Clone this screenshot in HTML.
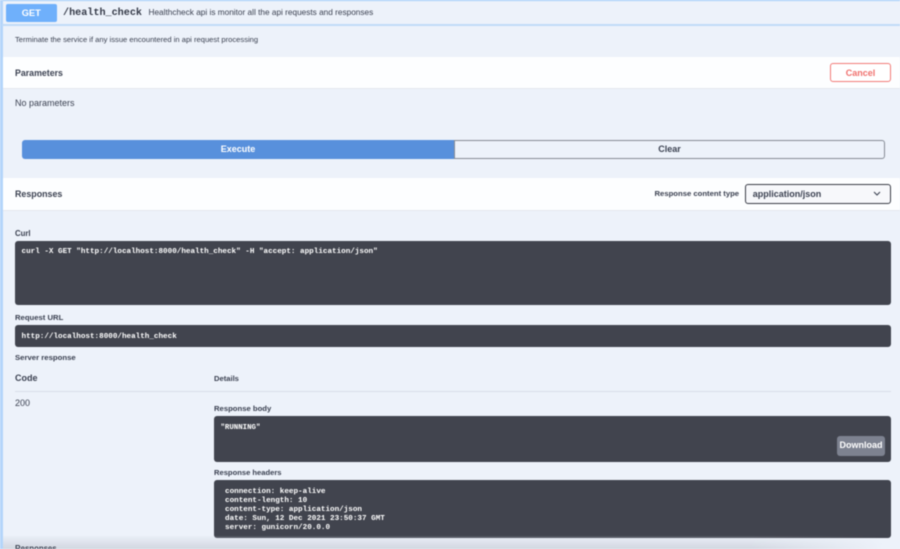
<!DOCTYPE html>
<html><head><meta charset="utf-8"><style>
html,body{margin:0;padding:0;width:900px;height:549px;overflow:hidden;background:#edf2fa}
#r{position:absolute;left:0;top:0;width:900px;height:549px;overflow:hidden;background:#edf2fa;font-family:"Liberation Sans",sans-serif;color:#3b4151;filter:blur(.45px)}
#r div{position:absolute;box-sizing:border-box;white-space:nowrap}
.t{line-height:14px;height:14px}
.b{font-weight:bold}
.m{font-family:"Liberation Mono",monospace;font-weight:bold}
.d{background:#41444e;border-radius:3px;left:15px;width:876px}
.w{background:#fdfeff;left:3px;width:897px;border-bottom:1px solid #e4e8ef}
.c{color:#fff;font-size:7.62px;line-height:9px}
</style></head><body><div id="r">
<div style="left:0;top:0;width:900px;height:1px;background:#9fcbfb"></div>
<div style="left:0;top:0;width:2.5px;height:549px;background:#b4d5fa"></div>
<div style="left:2px;top:24px;width:898px;height:2px;background:#c0dbf8"></div>

<div style="left:6px;top:4px;width:50.5px;height:18px;background:#6fb0fb;border-radius:2px;color:#fff;font-size:9.3px;font-weight:bold;line-height:19px;text-align:center">GET</div>
<div class="t m" style="left:63px;top:6.5px;font-size:10.15px;color:#333846">/health_check</div>
<div class="t" style="left:148.5px;top:6px;font-size:8.25px;color:#3b4151">Healthcheck api is monitor all the api requests and responses</div>
<div class="t" style="left:15px;top:32.5px;font-size:7.6px;color:#3b4151">Terminate the service if any issue encountered in api request processing</div>

<div class="w" style="top:57px;height:32px"></div>
<div class="t b" style="left:15px;top:65.5px;font-size:8.8px">Parameters</div>
<div style="left:830px;top:63px;width:61px;height:19px;border:1px solid #f27b78;border-radius:3px;background:#fff;color:#f0706d;font-size:9px;font-weight:bold;line-height:18px;text-align:center">Cancel</div>
<div class="t" style="left:15px;top:96px;font-size:9px">No parameters</div>

<div style="left:22px;top:140px;width:432px;height:19px;background:#5890dc;border-radius:3px 0 0 3px;color:#fff;font-size:9px;font-weight:bold;line-height:19.5px;text-align:center">Execute</div>
<div style="left:454px;top:140px;width:431px;height:19px;border:1.5px solid #868b95;border-radius:0 3px 3px 0;background:#edf2fa;color:#3b4151;font-size:9px;font-weight:bold;line-height:16.5px;text-align:center">Clear</div>

<div class="w" style="top:178px;height:33px"></div>
<div class="t b" style="left:15px;top:187px;font-size:8.9px">Responses</div>
<div class="t b" style="left:654.5px;top:187px;font-size:7.7px">Response content type</div>
<div style="left:745px;top:184px;width:146px;height:20px;border:1.3px solid #3a3d47;border-radius:3px;background:#f7f8fb;color:#3b4151;font-size:9px;font-weight:bold;line-height:18px;padding-left:6.7px">application/json</div>
<svg style="position:absolute;left:873px;top:191px" width="8" height="5" viewBox="0 0 8 5"><path d="M1 1 L4 4 L7 1" fill="none" stroke="#3b4151" stroke-width="1.1"/></svg>

<div class="t b" style="left:15px;top:226.5px;font-size:7.8px">Curl</div>
<div class="d" style="top:241px;height:64px"></div>
<div class="m c" style="left:21.5px;top:248px">curl -X GET "http://localhost:8000/health_check" -H "accept: application/json"</div>
<div class="t b" style="left:15px;top:311px;font-size:7.7px">Request URL</div>
<div class="d" style="top:325px;height:22px"></div>
<div class="m c" style="left:21.5px;top:333px">http://localhost:8000/health_check</div>
<div class="t b" style="left:15px;top:351px;font-size:7.75px">Server response</div>

<div class="t b" style="left:15px;top:371px;font-size:9px">Code</div>
<div class="t b" style="left:214px;top:371.5px;font-size:7.6px">Details</div>
<div style="left:15px;top:390.5px;width:876px;height:1.5px;background:#d8dee9"></div>
<div class="t" style="left:15px;top:396px;font-size:9px">200</div>

<div class="t b" style="left:214px;top:402px;font-size:7.7px">Response body</div>
<div class="d" style="left:214px;width:677px;top:416px;height:46px"></div>
<div class="m c" style="left:220.5px;top:424px;font-size:7.4px">"RUNNING"</div>
<div style="left:837px;top:436px;width:48px;height:20px;background:#7d8290;border-radius:3px;color:#fff;font-size:9px;font-weight:bold;line-height:19px;text-align:center">Download</div>

<div class="t b" style="left:214px;top:466px;font-size:7.6px">Response headers</div>
<div class="d" style="left:214px;width:677px;top:480px;height:58px"></div>
<div class="m c" style="left:225px;top:488px;line-height:9px;white-space:pre">connection: keep-alive
content-length: 10
content-type: application/json
date: Sun, 12 Dec 2021 23:50:37 GMT
server: gunicorn/20.0.0</div>

<div style="left:3px;top:536px;width:880px;height:13px;background:linear-gradient(to bottom,rgba(205,210,220,.1) 0%,rgba(205,210,220,.85) 100%);-webkit-mask-image:linear-gradient(to right,#000 85%,transparent 100%)"></div>
<div class="t b" style="left:15px;top:541.5px;font-size:7.8px">Responses</div>
</div></body></html>
